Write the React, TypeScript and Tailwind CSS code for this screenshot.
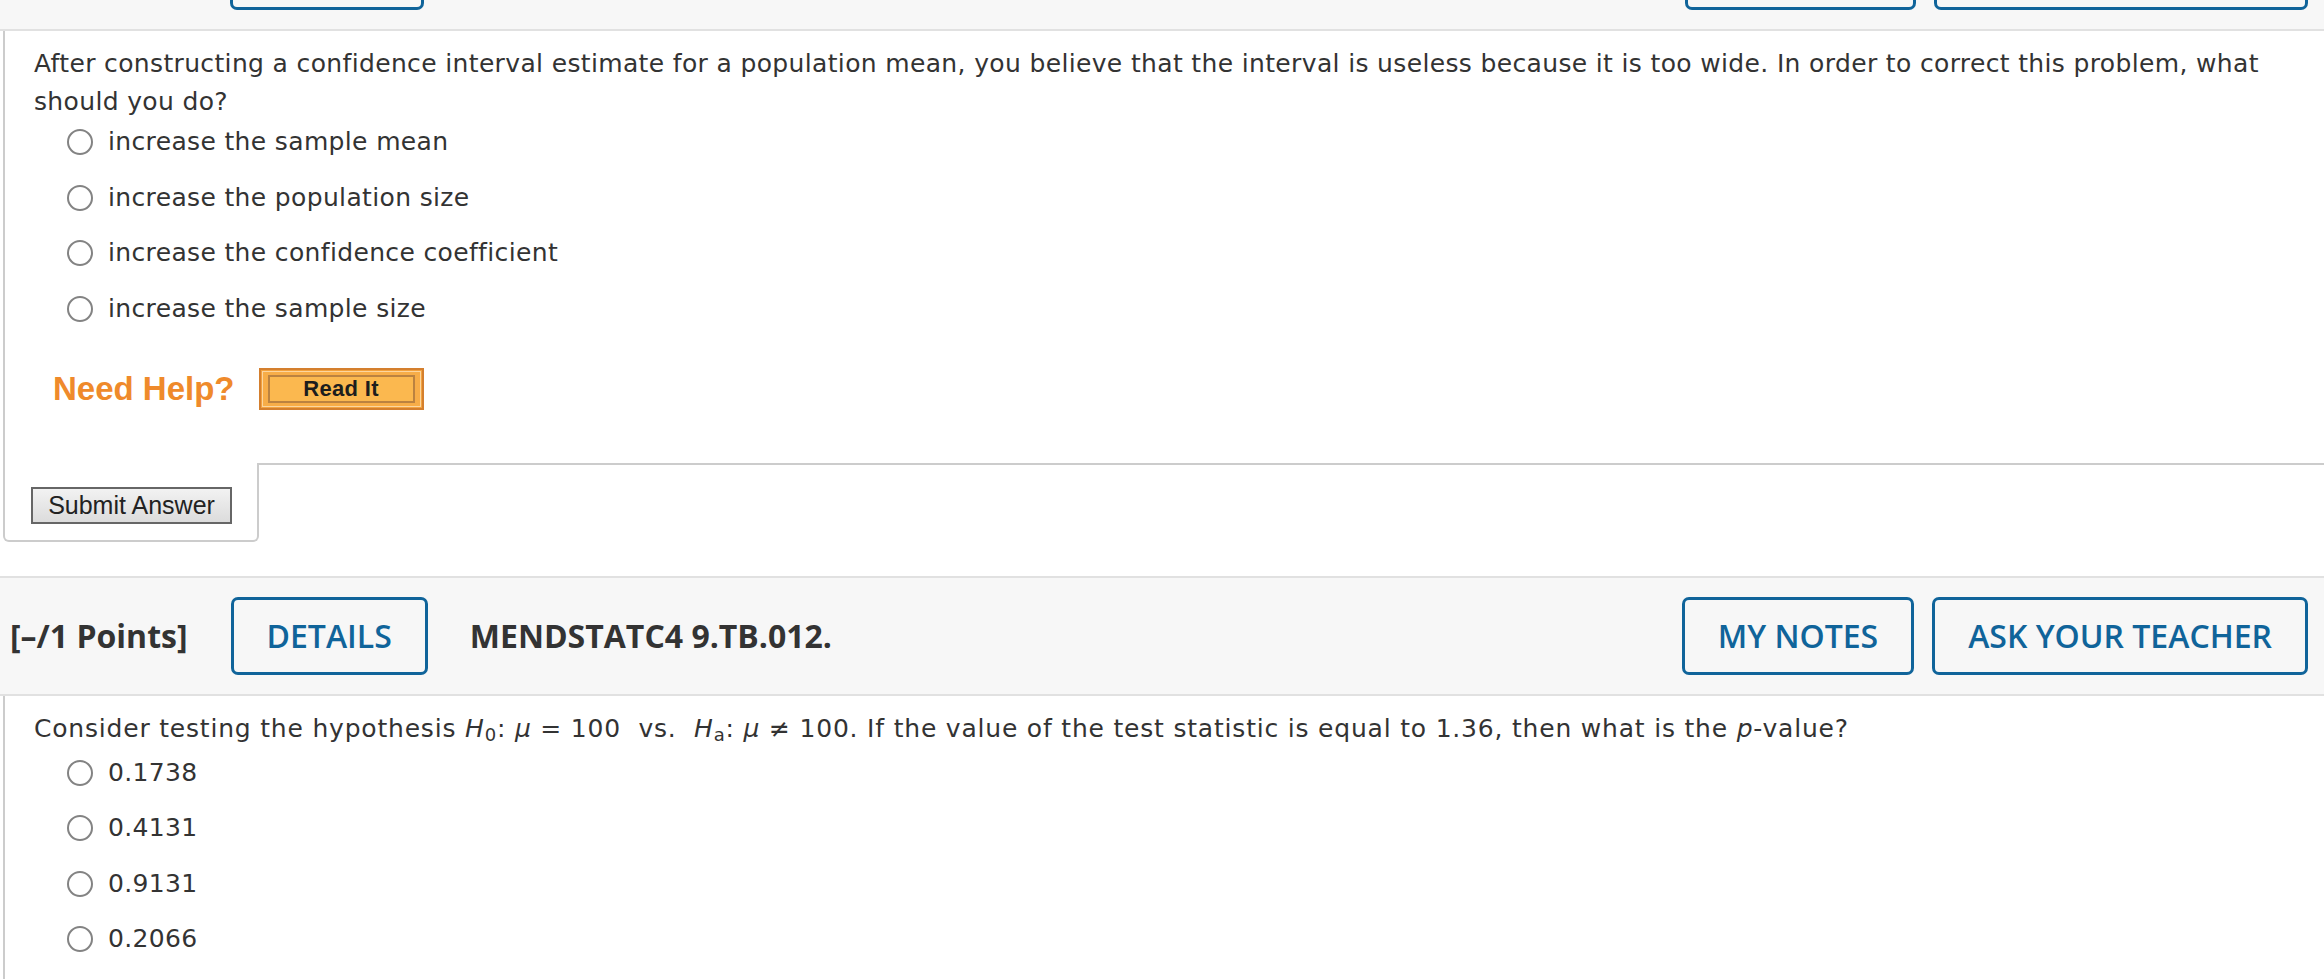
import React from "react"

const bodyFont = { fontFamily: '"DejaVu Sans", Verdana, sans-serif' }
const headFont = { fontFamily: '"Open Sans", "Liberation Sans", sans-serif' }
const arialFont = { fontFamily: '"Liberation Sans", Arial, sans-serif' }

function HeaderButton({ label }: { label: string }) {
  return (
    <button
      className="h-[78px] px-[33px] border-[3px] border-[#10649a] rounded-[7px] text-[#10649a] text-[32px] font-semibold bg-transparent leading-none"
      style={headFont}
    >
      {label}
    </button>
  )
}

// only the bottom edge of the previous question's header is still on screen
function ClippedHeader() {
  return (
    <div className="flex items-start h-[31px] border-b-2 border-[#e1e1e1] bg-[#f7f7f7] pr-[16px]">
      <div className="ml-[230px] w-[194px] h-[10px] border-x-[3px] border-b-[3px] border-[#10649a] rounded-b-[7px]" />
      <div className="ml-auto flex gap-[18px]">
        <div className="w-[231px] h-[10px] border-x-[3px] border-b-[3px] border-[#10649a] rounded-b-[7px]" />
        <div className="w-[374px] h-[10px] border-x-[3px] border-b-[3px] border-[#10649a] rounded-b-[7px]" />
      </div>
    </div>
  )
}

function QuestionHeader({ code, className = "" }: { code: string; className?: string }) {
  return (
    <div
      className={`flex items-center h-[120px] border-y-2 border-[#e1e1e1] bg-[#f7f7f7] pl-[10px] pr-[16px] ${className}`}
      style={headFont}
    >
      <span className="text-[32px] font-bold text-[#333]">[–/1 Points]</span>
      <div className="ml-[43px]">
        <HeaderButton label="DETAILS" />
      </div>
      <span className="ml-[42px] text-[32px] font-bold text-[#333]">{code}</span>
      <div className="ml-auto flex gap-[18px]">
        <HeaderButton label="MY NOTES" />
        <HeaderButton label="ASK YOUR TEACHER" />
      </div>
    </div>
  )
}

function RadioOption({ label }: { label: React.ReactNode }) {
  return (
    <label className="flex items-center h-[38px] pl-[33px]">
      <span className="w-[26px] h-[26px] rounded-full border-2 border-[#838383] bg-white shrink-0" />
      <span className="ml-[15px]">{label}</span>
    </label>
  )
}

function ReadItButton() {
  return (
    <div className="w-[165px] h-[42px] border-2 border-[#d47f2e] bg-[#f2a23f] p-[1px]">
      <div className="w-full h-full border border-[#fcd6a0] bg-[#f7ad48] px-[5px] py-[3px]">
        <div className="w-full h-full border-2 border-[#bb8240] bg-[#fbb84f] flex items-center justify-center">
          <span className="text-[22px] font-bold text-[#1d1d1d] leading-none" style={arialFont}>
            Read It
          </span>
        </div>
      </div>
    </div>
  )
}

export default function App() {
  const q1Options = [
    "increase the sample mean",
    "increase the population size",
    "increase the confidence coefficient",
    "increase the sample size",
  ]
  const q2Options = ["0.1738", "0.4131", "0.9131", "0.2066"]

  return (
    <div className="w-[2324px] h-[979px] overflow-hidden bg-white text-[#333]" style={bodyFont}>
      <ClippedHeader />

      {/* question 1 */}
      <div className="ml-[3px] border-l-2 border-[#cccccc] pl-[29px] pr-[8px] pt-[14px] text-[25px] tracking-[0.35px] leading-[38px]">
        <p>
          After constructing a confidence interval estimate for a population mean, you believe that the interval is
          useless because it is too wide. In order to correct this problem, what should you do?
        </p>
        <div className="mt-[2px] flex flex-col gap-[17.5px]">
          {q1Options.map((o) => (
            <RadioOption key={o} label={o} />
          ))}
        </div>
        <div className="mt-[40px] pl-[19px] flex items-center h-[42px]">
          <span className="text-[33px] font-bold text-[#ef8a2b] leading-none tracking-normal" style={arialFont}>
            Need Help?
          </span>
          <div className="ml-[24px]">
            <ReadItButton />
          </div>
        </div>
        <div className="h-[53px]" />
      </div>
      <div className="flex">
        <div className="ml-[3px] w-[256px] border-x-2 border-b-2 border-[#cccccc] rounded-b-[6px] pl-[26px] pt-[24px] pb-[16px]">
          <button
            className="w-[201px] h-[37px] border-2 border-[#666] bg-gradient-to-b from-[#f2f2f2] to-[#dcdcdc] text-[25px] leading-none text-[#222]"
            style={arialFont}
          >
            Submit Answer
          </button>
        </div>
        <div className="flex-1 border-t-2 border-[#cccccc]" />
      </div>

      {/* question 2 */}
      <QuestionHeader code="MENDSTATC4 9.TB.012." className="mt-[34px]" />
      <div className="ml-[3px] border-l-2 border-[#cccccc] pl-[29px] pr-[8px] pt-[14px] text-[25px] tracking-[0.35px] leading-[38px] h-[400px]">
        <p className="tracking-[0.8px]">
          Consider testing the hypothesis <i>H</i>
          <sub className="text-[18px]">0</sub>: <i>μ</i> = 100&nbsp; vs.&nbsp; <i>H</i>
          <sub className="text-[18px]">a</sub>: <i>μ</i> ≠ 100. If the value of the test statistic is equal to 1.36,
          then what is the <i>p</i>-value?
        </p>
        <div className="mt-[6px] flex flex-col gap-[17.5px]">
          {q2Options.map((o) => (
            <RadioOption key={o} label={o} />
          ))}
        </div>
      </div>
    </div>
  )
}
